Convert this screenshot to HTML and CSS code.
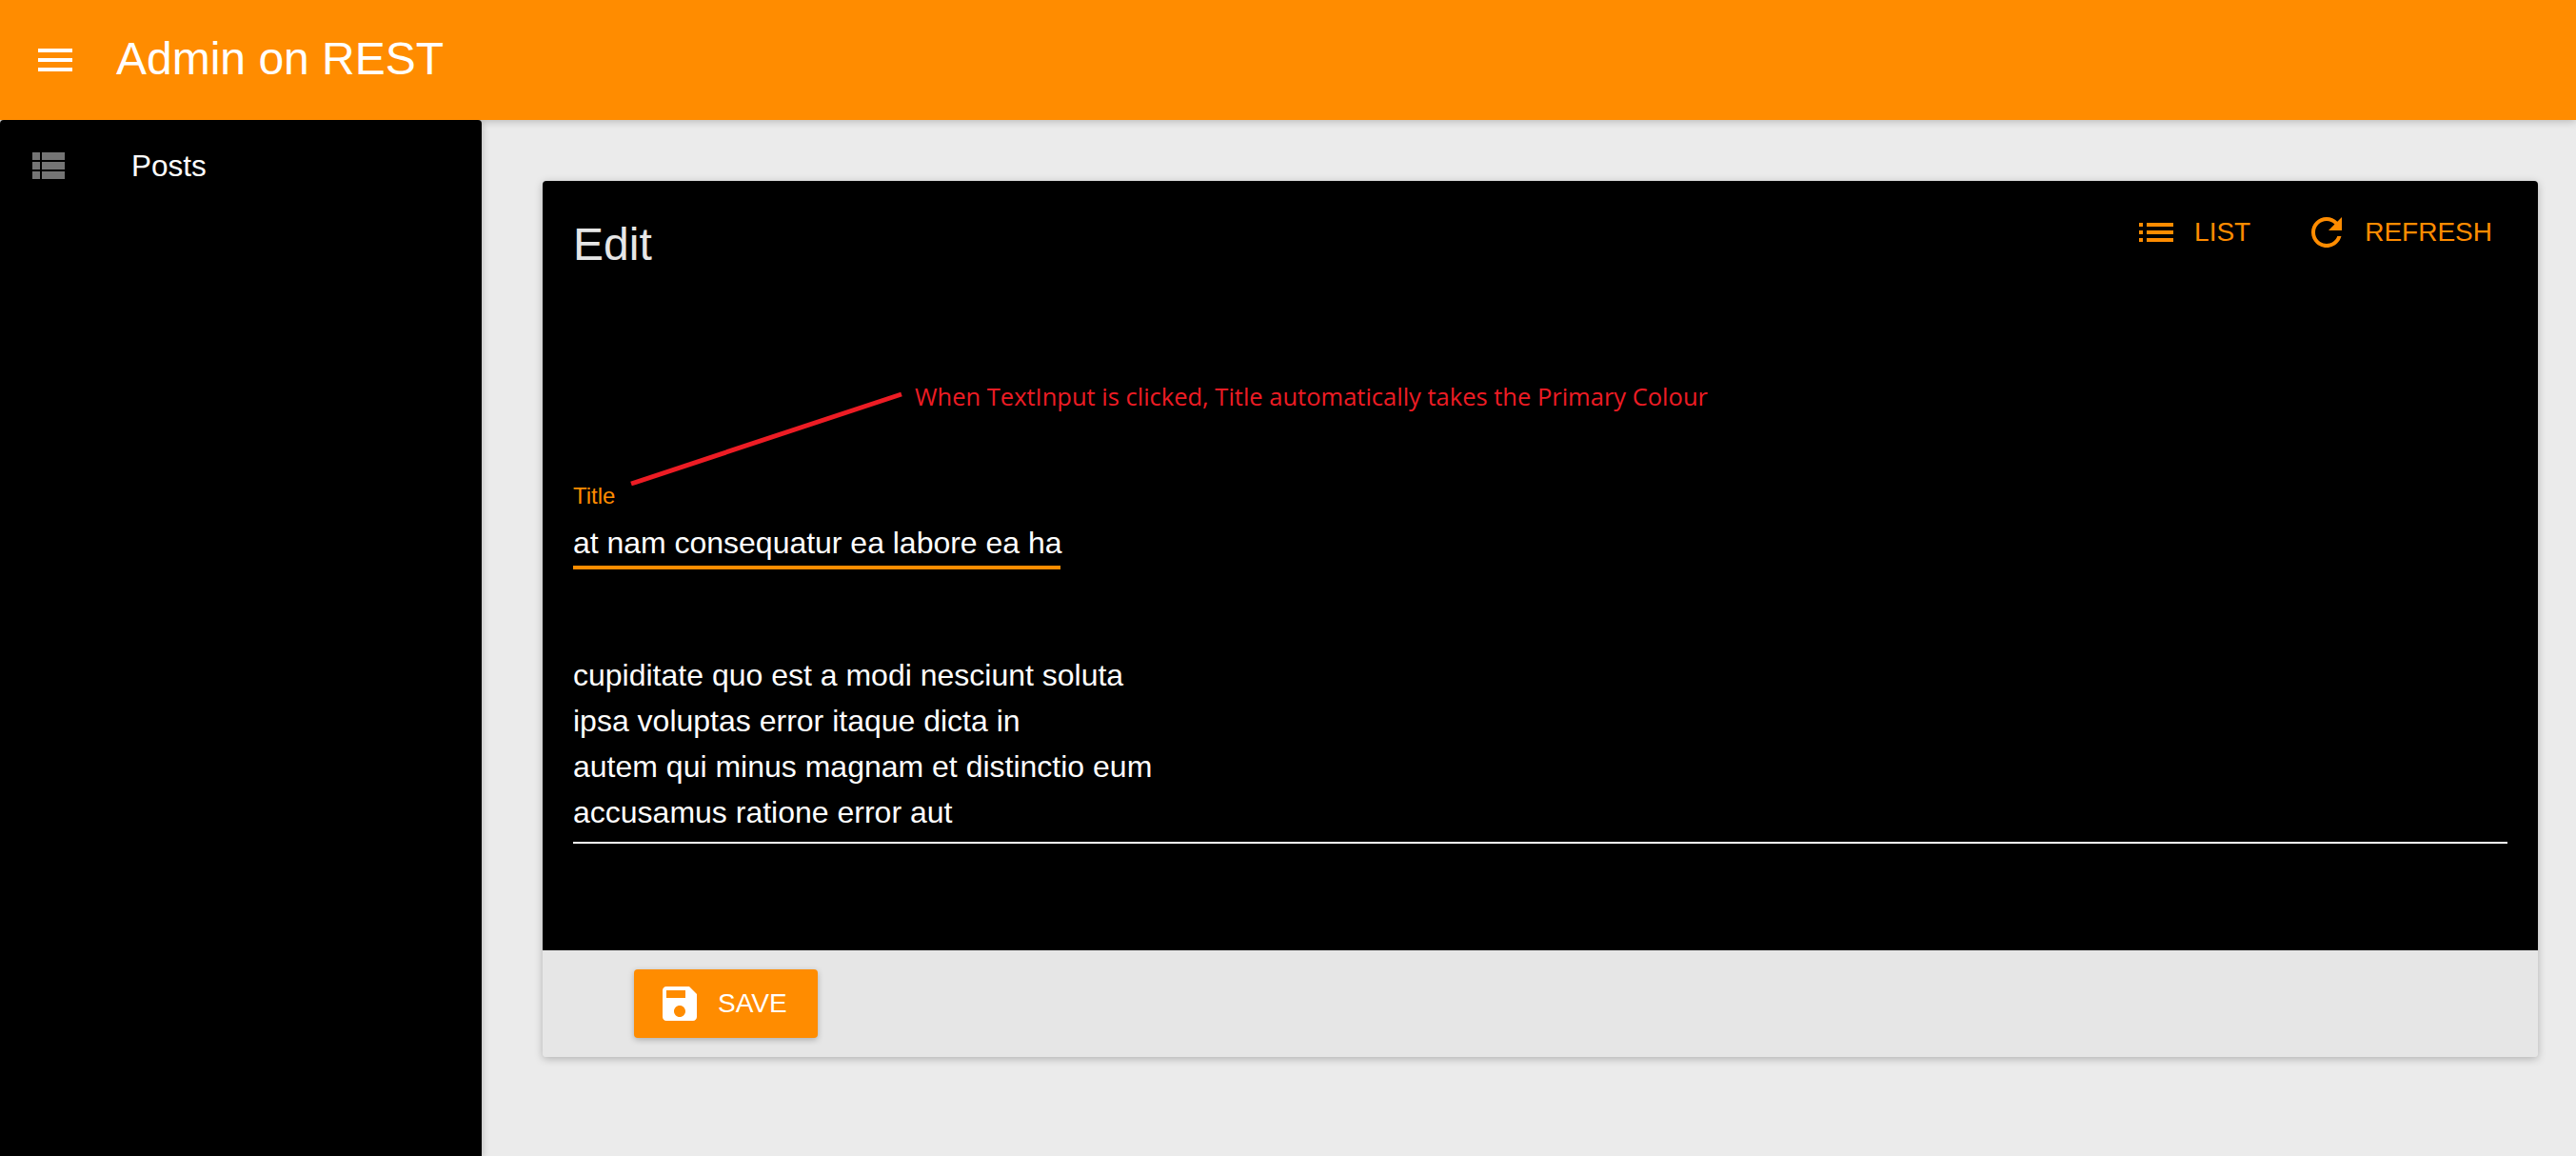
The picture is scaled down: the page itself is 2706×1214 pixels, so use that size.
FILE: index.html
```html
<!DOCTYPE html>
<html lang="en">
<head>
  <meta charset="UTF-8" />
  <title>Admin on REST</title>
  <link rel="stylesheet" href="styles.css">
</head>
<body>
  <header class="app-bar">
    <svg class="menu-icon" viewBox="0 0 24 24"><path d="M3 18h18v-2H3v2zm0-5h18v-2H3v2zm0-7v2h18V6H3z"/></svg>
    <h1>Admin on REST</h1>
  </header>
  <div class="layout">
    <aside class="sidebar">
      <div class="menu-item">
        <svg viewBox="0 0 24 24"><path d="M4 14h4v-4H4v4zm0 5h4v-4H4v4zM4 9h4V5H4v4zm5 5h12v-4H9v4zm0 5h12v-4H9v4zM9 5v4h12V5H9z"/></svg>
        <span>Posts</span>
      </div>
    </aside>
    <main class="content">
      <div class="card">
        <div class="card-body">
          <div class="card-head">
            <h2>Edit</h2>
            <div class="actions">
              <a class="action action-list">
                <svg viewBox="0 0 24 24"><path d="M3 13h2v-2H3v2zm0 4h2v-2H3v2zm0-8h2V7H3v2zm4 4h14v-2H7v2zm0 4h14v-2H7v2zM7 7v2h14V7H7z"/></svg>
                LIST
              </a>
              <a class="action">
                <svg viewBox="0 0 24 24"><path d="M17.65 6.35C16.2 4.9 14.21 4 12 4c-4.42 0-7.99 3.58-7.99 8s3.57 8 7.99 8c3.73 0 6.84-2.55 7.73-6h-2.08c-.82 2.33-3.04 4-5.65 4-3.31 0-6-2.69-6-6s2.69-6 6-6c1.66 0 3.14.69 4.22 1.78L13 11h7V4l-2.35 2.35z"/></svg>
                REFRESH
              </a>
            </div>
          </div>
          <div class="field field-title">
            <label>Title</label>
            <div class="value">at nam consequatur ea labore ea ha</div>
          </div>
          <div class="field field-body">
            <div class="value">cupiditate quo est a modi nesciunt soluta<br>ipsa voluptas error itaque dicta in<br>autem qui minus magnam et distinctio eum<br>accusamus ratione error aut</div>
          </div>
          <svg class="note-line" viewBox="0 0 290 100"><line x1="3" y1="97" x2="287" y2="3"/></svg>
          <div class="note">When TextInput is clicked, Title automatically takes the Primary Colour</div>
        </div>
        <div class="toolbar">
          <button class="save">
            <svg viewBox="0 0 24 24"><path d="M17 3H5c-1.11 0-2 .9-2 2v14c0 1.1.89 2 2 2h14c1.1 0 2-.9 2-2V7l-4-4zm-5 16c-1.66 0-3-1.34-3-3s1.34-3 3-3 3 1.34 3 3-1.34 3-3 3zm3-10H5V5h10v4z"/></svg>
            SAVE
          </button>
        </div>
      </div>
    </main>
  </div>
</body>
</html>
```

FILE: styles.css
```css
* {
  box-sizing: border-box;
  margin: 0;
  padding: 0;
}
body {
  font-family: "Liberation Sans", Arial, sans-serif;
  background: #ebebeb;
  height: 100vh;
  overflow: hidden;
  display: flex;
  flex-direction: column;
}
svg {
  display: block;
  width: 48px;
  height: 48px;
  fill: currentColor;
  flex: none;
}
.app-bar {
  height: 126px;
  flex: none;
  background: #ff8c00;
  color: #fff;
  display: flex;
  align-items: center;
  padding-left: 34px;
  position: relative;
  box-shadow: 0 2px 8px rgba(0, 0, 0, 0.2);
}
.app-bar h1 {
  font-size: 48px;
  font-weight: 400;
  margin-left: 40px;
  margin-bottom: 4px;
}
.layout {
  flex: 1;
  display: flex;
}
.sidebar {
  width: 506px;
  background: #000;
  border-radius: 4px 4px 0 0;
  box-shadow: 0 2px 8px rgba(0, 0, 0, 0.25);
}
.menu-item {
  height: 96px;
  display: flex;
  align-items: center;
  padding-left: 26px;
  color: #fff;
  font-size: 31.5px;
}
.menu-item svg {
  color: #757575;
  margin-right: 64px;
}
.content {
  flex: 1;
  padding: 64px 40px 0 64px;
}
.card {
  border-radius: 4px;
  box-shadow: 0 2px 8px rgba(0, 0, 0, 0.25);
  overflow: hidden;
}
.card-body {
  height: 808px;
  background: #000;
  color: #fff;
  padding: 0 32px;
  position: relative;
}
.card-head {
  display: flex;
  justify-content: space-between;
  height: 190px;
}
.card-head h2 {
  font-size: 48px;
  font-weight: 400;
  color: #e6e6e6;
  margin-top: 39px;
}
.actions {
  display: flex;
  margin-top: 30px;
  margin-right: 16px;
}
.action {
  height: 48px;
  display: flex;
  align-items: center;
  gap: 16px;
  color: #ff8c00;
  font-size: 28px;
}
.action-list {
  margin-right: 56px;
}
.field label {
  display: block;
  color: #ff8c00;
  font-size: 24px;
  line-height: 28px;
}
.value {
  font-size: 32px;
  line-height: 48px;
  white-space: nowrap;
}
.field-title {
  width: 512px;
  margin-top: 127px;
  border-bottom: 4px solid #ff8c00;
}
.field-title .value {
  margin-top: 11px;
  letter-spacing: -0.02px;
}
.field-body {
  margin-top: 87px;
  border-bottom: 2px solid #fff;
  padding-bottom: 7px;
}
.note-line {
  position: absolute;
  left: 90px;
  top: 221px;
  width: 290px;
  height: 100px;
  stroke: #ed1c24;
  stroke-width: 5;
}
.note {
  position: absolute;
  left: 391px;
  top: 208px;
  color: #ed1c24;
  font-family: "Open Sans", sans-serif;
  font-size: 25.5px;
  line-height: 36px;
  white-space: nowrap;
}
.toolbar {
  height: 112px;
  background: #e6e6e6;
  padding: 20px 0 0 96px;
}
.save {
  width: 193px;
  height: 72px;
  background: #ff8c00;
  color: #fff;
  border: none;
  border-radius: 4px;
  font-family: inherit;
  font-size: 28px;
  display: flex;
  align-items: center;
  padding-left: 24px;
  gap: 16px;
  box-shadow: 0 2px 6px rgba(0, 0, 0, 0.25);
}
```
